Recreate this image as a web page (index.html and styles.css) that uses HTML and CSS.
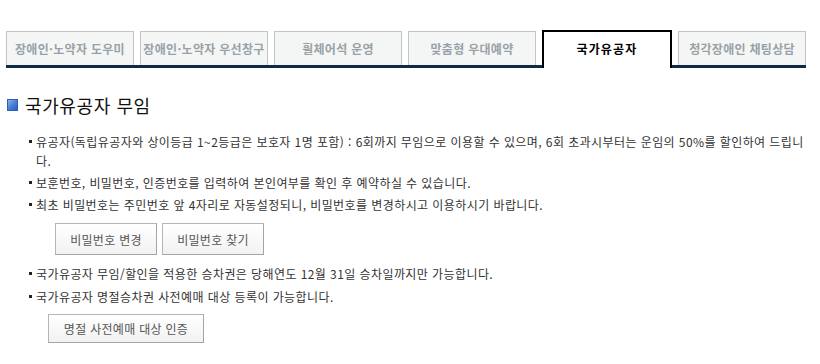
FILE: index.html
```html
<!DOCTYPE html>
<html lang="ko">
<head>
<meta charset="utf-8">
<link rel="stylesheet" href="styles.css">
</head>
<body>
<ul class="tabs">
  <li class="tab">장애인·노약자 도우미</li>
  <li class="tab">장애인·노약자 우선창구</li>
  <li class="tab">휠체어석 운영</li>
  <li class="tab">맞춤형 우대예약</li>
  <li class="tab active">국가유공자</li>
  <li class="tab">청각장애인 채팅상담</li>
</ul>
<h2 class="title"><span class="title-mark"></span>국가유공자 무임</h2>
<ul class="items">
  <li>유공자(독립유공자와 상이등급 1~2등급은 보호자 1명 포함) : 6회까지 무임으로 이용할 수 있으며, 6회 초과시부터는 운임의 50%를 할인하여 드립니다.</li>
  <li>보훈번호, 비밀번호, 인증번호를 입력하여 본인여부를 확인 후 예약하실 수 있습니다.</li>
  <li>최초 비밀번호는 주민번호 앞 4자리로 자동설정되니, 비밀번호를 변경하시고 이용하시기 바랍니다.</li>
</ul>
<div class="btns btns-pw">
  <button class="btn btn-pw">비밀번호 변경</button>
  <button class="btn btn-pw">비밀번호 찾기</button>
</div>
<ul class="items items-2">
  <li>국가유공자 무임/할인을 적용한 승차권은 당해연도 12월 31일 승차일까지만 가능합니다.</li>
  <li>국가유공자 명절승차권 사전예매 대상 등록이 가능합니다.</li>
</ul>
<div class="btns btns-holiday">
  <button class="btn btn-holiday">명절 사전예매 대상 인증</button>
</div>
</body>
</html>
```
FILE: styles.css
```css
* { box-sizing: border-box; }
body {
  margin: 0;
  background: #fff;
  font-family: "Noto Sans CJK KR", "Noto Sans", sans-serif;
  color: #333;
  font-size: 12px;
}
.tabs {
  list-style: none;
  margin: 30px 0 0 6px;
  padding: 0;
  width: 800px;
  display: flex;
  align-items: flex-end;
  gap: 6px;
  border-bottom: 3px solid #0e2a44;
  height: 38px;
}
.tab {
  flex: 1 1 0;
  height: 34px;
  border: 1px solid #c4c4c4;
  border-bottom: none;
  background: #f4f6f6;
  color: #98a2a6;
  font-weight: bold;
  font-size: 12px;
  display: flex;
  align-items: center;
  justify-content: center;
  white-space: nowrap;
  letter-spacing: 0.3px;
}
.tab.active {
  height: 38px;
  margin-bottom: -3px;
  border: 2px solid #000;
  border-bottom: none;
  background: #fff;
  color: #000;
  padding-bottom: 3px;
  letter-spacing: 1.2px;
}
.title {
  margin: 26px 0 0 7px;
  display: flex;
  align-items: center;
  gap: 7px;
  font-size: 18px;
  font-weight: normal;
  color: #111;
  line-height: 22px;
  letter-spacing: 0.6px;
}
.title-mark {
  width: 11px;
  height: 12px;
  background: linear-gradient(135deg, #8fb3ec 0%, #4a7fd6 50%, #2d5fb8 100%);
  border: 1px solid #2f5fb5;
}
.items {
  list-style: none;
  margin: 16px 0 0 0;
  padding: 0 12px 0 36px;
  width: 818px;
  line-height: 19px;
  color: #333;
}
.items li {
  position: relative;
  margin-bottom: 3px;
  letter-spacing: 0.42px;
}
.items li::before {
  content: "";
  position: absolute;
  left: -7px;
  top: 8px;
  width: 3px;
  height: 3px;
  background: #222;
}
.items-2 { margin-top: 9px; }
.items-2 li { margin-bottom: 4px; }
.btns {
  display: flex;
  gap: 5px;
}
.btns-pw { margin: 9px 0 0 55px; }
.btns-holiday { margin: 8px 0 0 48px; }
.btn {
  font-family: inherit;
  font-size: 12px;
  color: #555;
  background: linear-gradient(#ffffff, #f2f2f2);
  border: 1px solid #b5b5b5;
  border-right-color: #a5a5a5;
  border-bottom-color: #a5a5a5;
  padding: 0;
  letter-spacing: 0.3px;
  cursor: pointer;
}
.btn-pw { width: 102px; height: 32px; }
.btn-holiday { width: 156px; height: 29px; }
```
